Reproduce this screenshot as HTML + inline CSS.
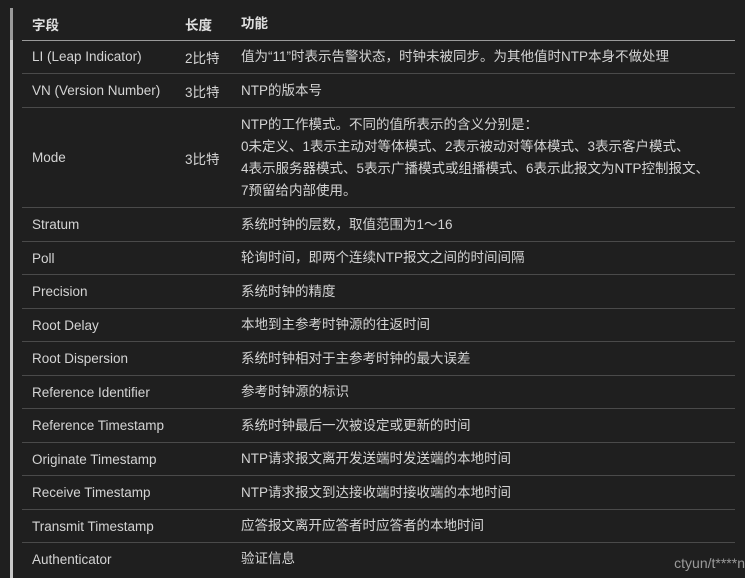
<!DOCTYPE html>
<html><head><meta charset="utf-8"><style>
html,body{margin:0;padding:0;background:#1f1f1f;width:745px;height:578px;overflow:hidden;}
body{font-family:"Liberation Sans","Noto Sans CJK SC",sans-serif;font-size:13.5px;color:#d4d4d4;position:relative;}
.bar{position:absolute;left:10px;top:8px;width:3px;height:570px;background:#c8c8c8;}
.bar2{position:absolute;left:10px;top:8px;width:3px;height:32px;background:#9a9a9a;}
.r{position:absolute;left:22px;width:713px;border-bottom:1px solid #4a4a4a;}
.r div{position:absolute;top:0;bottom:0;display:flex;align-items:center;}
.a{left:10px}.b{left:163px}.c{left:219px;line-height:22px}
.h{font-weight:bold;color:#e0e0e0;border-bottom:1px solid #9a9a9a;}
.wm{position:absolute;right:0;top:555px;color:#9a9a9a;font-size:14px;}
</style></head><body>
<div class="bar"></div><div class="bar2"></div>
<div class="r h" style="top:8px;height:32px"><div class="a">字段</div><div class="b">长度</div><div class="c">功能</div></div>
<div class="r" style="top:40px;height:33px"><div class="a">LI (Leap Indicator)</div><div class="b">2比特</div><div class="c">值为“11”时表示告警状态，时钟未被同步。为其他值时NTP本身不做处理</div></div>
<div class="r" style="top:74px;height:33px"><div class="a">VN (Version Number)</div><div class="b">3比特</div><div class="c">NTP的版本号</div></div>
<div class="r" style="top:108px;height:99px"><div class="a">Mode</div><div class="b">3比特</div><div class="c">NTP的工作模式。不同的值所表示的含义分别是：<br>0未定义、1表示主动对等体模式、2表示被动对等体模式、3表示客户模式、<br>4表示服务器模式、5表示广播模式或组播模式、6表示此报文为NTP控制报文、<br>7预留给内部使用。</div></div>
<div class="r" style="top:208px;height:33px"><div class="a">Stratum</div><div class="c">系统时钟的层数，取值范围为1～16</div></div>
<div class="r" style="top:242px;height:32px"><div class="a">Poll</div><div class="c">轮询时间，即两个连续NTP报文之间的时间间隔</div></div>
<div class="r" style="top:275px;height:33px"><div class="a">Precision</div><div class="c">系统时钟的精度</div></div>
<div class="r" style="top:309px;height:32px"><div class="a">Root Delay</div><div class="c">本地到主参考时钟源的往返时间</div></div>
<div class="r" style="top:342px;height:33px"><div class="a">Root Dispersion</div><div class="c">系统时钟相对于主参考时钟的最大误差</div></div>
<div class="r" style="top:376px;height:32px"><div class="a">Reference Identifier</div><div class="c">参考时钟源的标识</div></div>
<div class="r" style="top:409px;height:33px"><div class="a">Reference Timestamp</div><div class="c">系统时钟最后一次被设定或更新的时间</div></div>
<div class="r" style="top:443px;height:32px"><div class="a">Originate Timestamp</div><div class="c">NTP请求报文离开发送端时发送端的本地时间</div></div>
<div class="r" style="top:476px;height:33px"><div class="a">Receive Timestamp</div><div class="c">NTP请求报文到达接收端时接收端的本地时间</div></div>
<div class="r" style="top:510px;height:32px"><div class="a">Transmit Timestamp</div><div class="c">应答报文离开应答者时应答者的本地时间</div></div>
<div class="r" style="top:543px;height:32px;border-bottom:none"><div class="a">Authenticator</div><div class="c">验证信息</div></div>
<div class="wm">ctyun/t****n</div>
</body></html>
